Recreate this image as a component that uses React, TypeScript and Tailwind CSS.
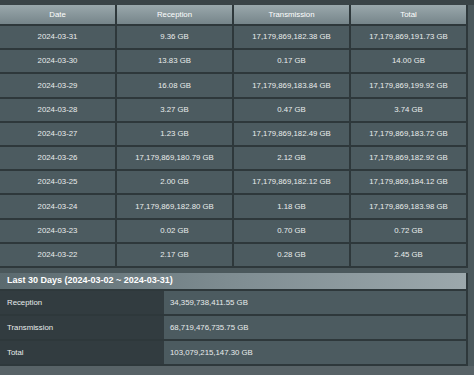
const rows = [
  ['2024-03-31', '9.36 GB', '17,179,869,182.38 GB', '17,179,869,191.73 GB'],
  ['2024-03-30', '13.83 GB', '0.17 GB', '14.00 GB'],
  ['2024-03-29', '16.08 GB', '17,179,869,183.84 GB', '17,179,869,199.92 GB'],
  ['2024-03-28', '3.27 GB', '0.47 GB', '3.74 GB'],
  ['2024-03-27', '1.23 GB', '17,179,869,182.49 GB', '17,179,869,183.72 GB'],
  ['2024-03-26', '17,179,869,180.79 GB', '2.12 GB', '17,179,869,182.92 GB'],
  ['2024-03-25', '2.00 GB', '17,179,869,182.12 GB', '17,179,869,184.12 GB'],
  ['2024-03-24', '17,179,869,182.80 GB', '1.18 GB', '17,179,869,183.98 GB'],
  ['2024-03-23', '0.02 GB', '0.70 GB', '0.72 GB'],
  ['2024-03-22', '2.17 GB', '0.28 GB', '2.45 GB'],
];

const summary = [
  ['Reception', '34,359,738,411.55 GB'],
  ['Transmission', '68,719,476,735.75 GB'],
  ['Total', '103,079,215,147.30 GB'],
];

const headers = ['Date', 'Reception', 'Transmission', 'Total'];

export default function App() {
  return (
    <div
      className="w-[474px] h-[375px] overflow-hidden bg-[#4b585c] flex flex-col text-[#e9ecec] text-[7.8px]"
      style={{ fontFamily: '"Liberation Sans", Arial, sans-serif' }}
    >
      <div className="h-[5px] bg-[#3a4447] shrink-0" />

      {/* Daily table */}
      <div className="w-[468px] shrink-0">
        <div className="grid grid-cols-4 h-[21px] border-b-2 border-[#2e383b] bg-gradient-to-b from-[#9aa8ac] to-[#76858a]">
          {headers.map(h => (
            <div key={h} className="flex items-center justify-center border-r-2 border-[#2e383b] text-white">
              {h}
            </div>
          ))}
        </div>
        {rows.map(r => (
          <div key={r[0]} className="grid grid-cols-4 h-[24.2px] border-b-2 border-[#2e383b] bg-[#4c5b60]">
            {r.map((c, i) => (
              <div key={i} className="flex items-center justify-center border-r-2 border-[#2e383b]">
                {c}
              </div>
            ))}
          </div>
        ))}
      </div>

      {/* Summary */}
      <div className="w-[468px] mt-[5px] shrink-0 border-r-2 border-[#2e383b]">
        <div className="h-[18px] flex items-center px-[7px] font-bold text-[9px] text-white border-b-2 border-[#2e383b] bg-gradient-to-r from-[#5b6a6f] via-[#7f8d92] to-[#9ca8ac]">
          Last 30 Days (2024-03-02 ~ 2024-03-31)
        </div>
        {summary.map(([k, v]) => (
          <div key={k} className="flex h-[25px] border-b-2 border-[#2e383b]">
            <div className="w-[164px] bg-[#323c40] flex items-center px-[7px]">{k}</div>
            <div className="flex-1 bg-[#4c5b60] flex items-center px-[6px]">{v}</div>
          </div>
        ))}
      </div>

      <div className="flex-1 bg-[#586367]" />
    </div>
  );
}
